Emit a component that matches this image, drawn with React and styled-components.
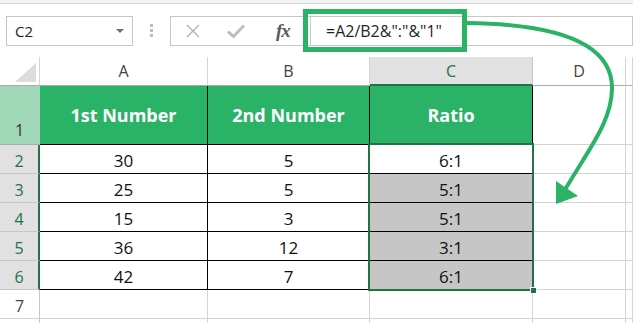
import styled, { createGlobalStyle } from "styled-components";

const GlobalStyle = createGlobalStyle`
  html, body {
    margin: 0;
    padding: 0;
    background: #fff;
  }
  body {
    font-family: "Open Sans", "Liberation Sans", sans-serif;
  }
`;

const GREEN = "#2ab266";
const DARK_GREEN = "#217346";
const GRID = "#d4d4d4";

const Page = styled.div`
  position: relative;
  width: 633px;
  height: 323px;
  overflow: hidden;
  background: #fff;
`;

const TopBand = styled.div`
  height: 3px;
  background: #f3f3f3;
  border-bottom: 1px solid #d6d6d6;
`;

const FormulaBar = styled.div`
  display: flex;
  align-items: center;
  height: 53px;
  padding-left: 6px;
  box-sizing: border-box;
`;

const NameBox = styled.div`
  box-sizing: border-box;
  width: 127px;
  height: 30px;
  border: 1px solid #c6c6c6;
  display: flex;
  align-items: center;
  justify-content: space-between;
  padding: 0 8px 0 8px;
  font-size: 15px;
  color: #262626;
`;

const Caret = styled.span`
  width: 0;
  height: 0;
  border-left: 4px solid transparent;
  border-right: 4px solid transparent;
  border-top: 4px solid #6d6d6d;
`;

const Grip = styled.div`
  display: flex;
  flex-direction: column;
  gap: 2px;
  margin: 0 17px;
`;

const GripDot = styled.span`
  width: 3px;
  height: 3px;
  background: #bdbdbd;
`;

const FxGroup = styled.div`
  box-sizing: border-box;
  width: 140px;
  height: 30px;
  border: 1px solid #c6c6c6;
  border-right: none;
  display: flex;
  align-items: center;
  padding-left: 15px;
  gap: 27px;
`;

const FxLabel = styled.span`
  font-family: "Liberation Serif", "DejaVu Serif", serif;
  font-style: italic;
  font-weight: bold;
  font-size: 19px;
  color: #5a5a5a;
  margin-left: 4px;
  letter-spacing: -1px;
`;

const FormulaInput = styled.div`
  box-sizing: border-box;
  flex: 1;
  height: 30px;
  border: 1px solid #c6c6c6;
  display: flex;
  align-items: center;
  padding-left: 15px;
  font-size: 16px;
  color: #1f1f1f;
`;

const Sheet = styled.div`
  display: grid;
  grid-template-columns: 40px 168px 162px 163px 93px 1fr;
  grid-template-rows: 29px 59px repeat(7, 29px);
`;

const Cell = styled.div`
  box-sizing: border-box;
  display: flex;
  align-items: center;
  justify-content: center;
  border-right: 1px solid ${GRID};
  border-bottom: 1px solid ${GRID};
  font-size: 17px;
  color: #111;
  padding-top: 3px;
`;

const Corner = styled(Cell)`
  border-bottom-color: #ababab;
  align-items: flex-end;
  justify-content: flex-end;
  padding: 0 3px 3px 0;
`;

const CornerMark = styled.span`
  width: 21px;
  height: 19px;
  background: #dcdcdc;
  clip-path: polygon(100% 0, 100% 100%, 0 100%);
`;

const ColHead = styled(Cell)`
  font-size: 16px;
  padding-top: 0;
  border-bottom: ${(p) => (p.$active ? `2px solid ${DARK_GREEN}` : "1px solid #ababab")};
  background: ${(p) => (p.$active ? "#e1e1e1" : "#fff")};
  color: ${(p) => (p.$active ? DARK_GREEN : "#444")};
  border-right-color: ${(p) => (p.$active ? "#c6c6c6" : GRID)};
`;

const RowHead = styled(Cell)`
  font-size: 16px;
  background: ${(p) => p.$bg || "#fff"};
  color: ${(p) => p.$color || "#444"};
  border-bottom-color: ${(p) => p.$line || GRID};
  border-right: ${(p) => p.$edge || `1px solid #c6c6c6`};
  align-items: ${(p) => (p.$bottom ? "flex-end" : "center")};
  padding-bottom: ${(p) => (p.$bottom ? "3px" : "0")};
`;

const HeaderCell = styled(Cell)`
  background: ${GREEN};
  color: #fff;
  font-weight: 700;
  font-size: 18px;
  padding-top: 0;
  border-right: 1px solid #000;
  border-bottom: 1px solid #000;
`;

const DataCell = styled(Cell)`
  border-right: 1px solid #000;
  border-bottom: 1px solid #000;
  background: ${(p) => (p.$shade ? "#c6c6c6" : "#fff")};
`;

const RatioCell = styled(DataCell)`
  grid-column: 4;
  grid-row: ${(p) => p.$row};
`;

const Selection = styled.div`
  grid-column: 4;
  grid-row: 3 / span 5;
  position: relative;
  margin: -2px -1px -1px -2px;
  border: 2.5px solid ${DARK_GREEN};
  pointer-events: none;
  z-index: 2;
`;

const FillHandle = styled.span`
  position: absolute;
  right: -5px;
  bottom: -5px;
  width: 5px;
  height: 5px;
  background: ${DARK_GREEN};
  border: 1px solid #fff;
`;

const Overlay = styled.svg`
  position: absolute;
  left: 0;
  top: 0;
  pointer-events: none;
  z-index: 5;
`;

const rows = [
  ["30", "5", "6:1"],
  ["25", "5", "5:1"],
  ["15", "3", "5:1"],
  ["36", "12", "3:1"],
  ["42", "7", "6:1"],
];

export default function App() {
  return (
    <Page>
      <GlobalStyle />
      <TopBand />
      <FormulaBar>
        <NameBox>
          C2
          <Caret />
        </NameBox>
        <Grip>
          <GripDot />
          <GripDot />
          <GripDot />
        </Grip>
        <FxGroup>
          <svg width="14" height="14" viewBox="0 0 14 14">
            <path d="M1 1 L13 13 M13 1 L1 13" stroke="#b3b3b3" strokeWidth="1.4" fill="none" />
          </svg>
          <svg width="18" height="14" viewBox="0 0 18 14">
            <path d="M1 7.5 L6.5 12.5 L17 1.5" stroke="#bdbdbd" strokeWidth="3" fill="none" />
          </svg>
          <FxLabel>fx</FxLabel>
        </FxGroup>
        <FormulaInput>=A2/B2&amp;":"&amp;"1"</FormulaInput>
      </FormulaBar>

      <Sheet>
        <Corner>
          <CornerMark />
        </Corner>
        <ColHead>A</ColHead>
        <ColHead>B</ColHead>
        <ColHead $active>C</ColHead>
        <ColHead>D</ColHead>
        <ColHead />

        <RowHead $bg="#a0d8b8" $color="#333" $line="#ababab" $edge="1px solid #a0d8b8" $bottom>
          1
        </RowHead>
        <HeaderCell>1st Number</HeaderCell>
        <HeaderCell>2nd Number</HeaderCell>
        <HeaderCell>Ratio</HeaderCell>
        <Cell />
        <Cell />

        {rows.map(([a, b, c], i) => (
          <Row key={i} a={a} b={b} c={c} n={i + 2} shade={i > 0} />
        ))}

        <RowHead>7</RowHead>
        <Cell />
        <Cell />
        <Cell />
        <Cell />
        <Cell />
        <RowHead />
        <Cell />
        <Cell />
        <Cell />
        <Cell />
        <Cell />

        <Selection>
          <FillHandle />
        </Selection>
      </Sheet>

      <Overlay width="633" height="323" viewBox="0 0 633 323">
        <rect x="305.5" y="11.5" width="159" height="38" fill="none" stroke={GREEN} strokeWidth="5" />
        <path
          d="M467 23 C555 24 612 42 612 88 C612 122 588 150 563 193"
          fill="none"
          stroke={GREEN}
          strokeWidth="4"
        />
        <polygon points="556,181 556,204 578,196" fill={GREEN} />
      </Overlay>
    </Page>
  );
}

function Row({ a, b, c, n, shade }) {
  return (
    <>
      <RowHead $bg="#e1e1e1" $color={DARK_GREEN} $line="#c6c6c6" $edge={`2px solid ${DARK_GREEN}`}>
        {n}
      </RowHead>
      <DataCell>{a}</DataCell>
      <DataCell>{b}</DataCell>
      <RatioCell $shade={shade} $row={n + 1}>
        {c}
      </RatioCell>
      <Cell />
      <Cell />
    </>
  );
}
